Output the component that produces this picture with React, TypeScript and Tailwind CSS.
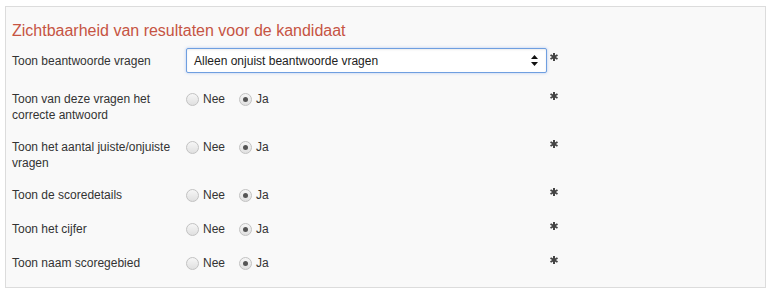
import React from "react"

const font = { fontFamily: '"Liberation Sans", Arial, sans-serif' }

function Radio({ checked }: { checked?: boolean }) {
  return (
    <span className="inline-flex h-[13px] w-[13px] items-center justify-center rounded-full border border-[#c2c2c2] bg-gradient-to-b from-[#f6f6f6] to-[#e0e0e0]">
      {checked && <span className="h-[5px] w-[5px] rounded-full bg-[#555]" />}
    </span>
  )
}

function Star() {
  return (
    <svg width="8" height="8" viewBox="0 0 8 8" className="text-[#444]">
      <g stroke="currentColor" strokeWidth="2" strokeLinecap="butt">
        <line x1="4" y1="0" x2="4" y2="8" />
        <line x1="0.5" y1="2" x2="7.5" y2="6" />
        <line x1="0.5" y1="6" x2="7.5" y2="2" />
      </g>
    </svg>
  )
}

function YesNo() {
  return (
    <div className="flex items-center gap-[4px] text-[12px] leading-[16px] text-[#333]">
      <Radio />
      <span className="mr-[10px]">Nee</span>
      <Radio checked />
      <span>Ja</span>
    </div>
  )
}

const rows = [
  { label: "Toon van deze vragen het correcte antwoord" },
  { label: "Toon het aantal juiste/onjuiste vragen" },
  { label: "Toon de scoredetails" },
  { label: "Toon het cijfer" },
  { label: "Toon naam scoregebied" },
]

export default function App() {
  return (
    <div className="bg-white px-[5px] pt-[6px] pb-[3px]" style={font}>
      <div className="h-[282px] border border-[#dcdcdc] bg-[#f9f9f9] pl-[6px] pt-[14px]">
        <h2 className="text-[16px] leading-[20px] text-[#c65443]">
          Zichtbaarheid van resultaten voor de kandidaat
        </h2>

        {/* select row */}
        <div className="mt-[7px] flex items-start">
          <div className="w-[174px] pt-[5px] text-[12px] leading-[16px] text-[#333]">Toon beantwoorde vragen</div>
          <div className="flex h-[25px] w-[361px] items-center justify-between rounded-[2px] border border-[#6f9fe0] bg-white pl-[7px] pr-[8px] text-[12px] text-[#222] shadow-[inset_0_1px_2px_rgba(0,0,0,0.08),0_0_3px_rgba(102,150,233,0.5)]">
            <span>Alleen onjuist beantwoorde vragen</span>
            <svg width="7" height="11" viewBox="0 0 7 11">
              <path d="M3.5 0 L7 4 H0 Z M0 7 H7 L3.5 11 Z" fill="#111" />
            </svg>
          </div>
          <div className="ml-[3px] pt-[5px]">
            <Star />
          </div>
        </div>

        {rows.map((r, i) => (
          <div key={i} className={`flex items-start ${i === 0 ? "mt-[18px]" : i < 3 ? "mt-[16px]" : "mt-[18px]"}`}>
            <div className="w-[174px] pr-[8px] text-[12px] leading-[16px] text-[#333]">{r.label}</div>
            <div className="w-[364px]">
              <YesNo />
            </div>
            <div className="pt-[1px]">
              <Star />
            </div>
          </div>
        ))}
      </div>
    </div>
  )
}
